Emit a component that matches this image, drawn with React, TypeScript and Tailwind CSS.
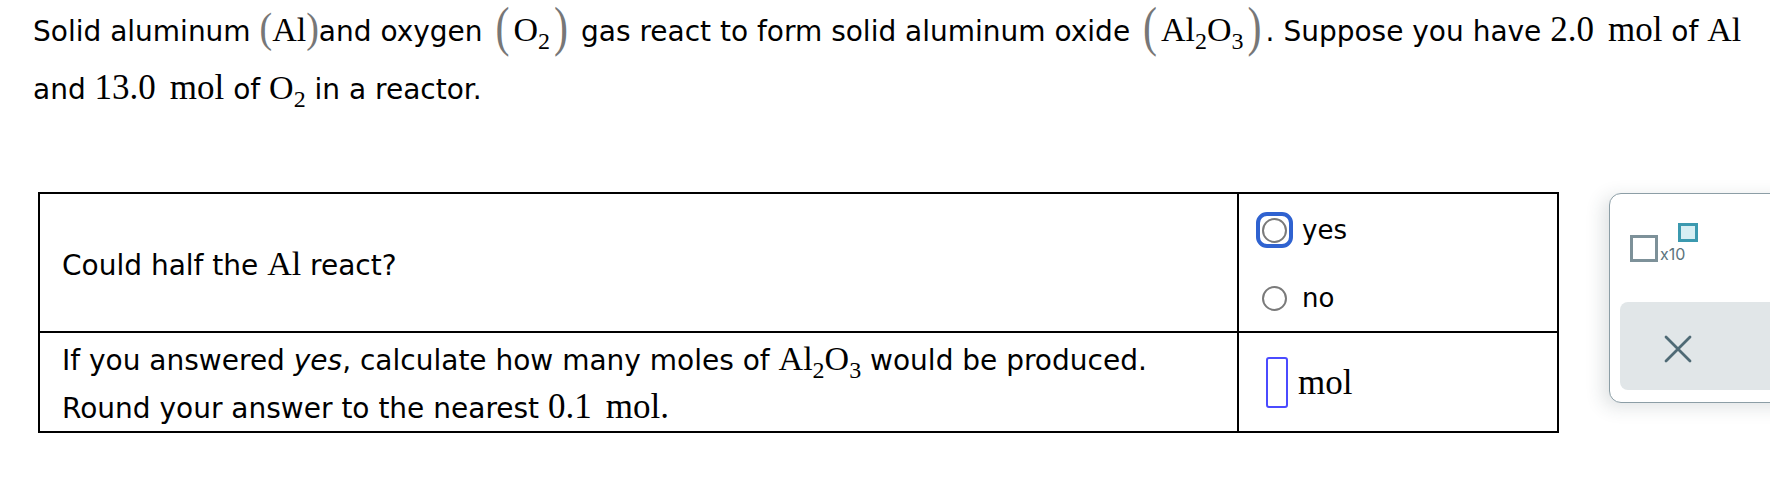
import React from "react";

const M = ({ children }: { children: React.ReactNode }) => (
  <span className="font-['Liberation_Serif',serif] text-[34px] leading-none">{children}</span>
);

// number followed by a unit, with MathJax-like gap
const Q = ({ n, u }: { n: string; u: string }) => (
  <span className="font-['Liberation_Serif',serif] text-[35px] leading-none">
    {n}
    <span className="ml-[14px]">{u}</span>
  </span>
);

const Sub = ({ children }: { children: React.ReactNode }) => (
  <span className="relative top-[8px] font-['Liberation_Serif',serif] text-[24px] leading-none">
    {children}
  </span>
);

const Paren = ({ c, big }: { c: string; big?: boolean }) => (
  <span
    className={
      big
        ? "mx-[4px] inline-block scale-y-[1.3] font-['Liberation_Serif',serif] text-[42px] leading-none text-[#777]"
        : "inline-block scale-y-[1.1] font-['Liberation_Serif',serif] text-[38px] leading-none text-[#777]"
    }
  >
    {c}
  </span>
);

const Radio = ({ label, focused }: { label: string; focused?: boolean }) => (
  <div className="flex h-[36px] items-center">
    <div
      className={
        focused
          ? "flex h-[36px] w-[37px] items-center justify-center rounded-[11px] border-[4px] border-[#2f62d0]"
          : "flex h-[36px] w-[37px] items-center justify-center"
      }
    >
      <div className="h-[25px] w-[25px] rounded-full border-2 border-[#7a7a7a] bg-white" />
    </div>
    <span className="ml-[9px] text-[26px] leading-none">{label}</span>
  </div>
);

export default function App() {
  return (
    <div className="h-[498px] w-[1770px] overflow-hidden bg-white font-['DejaVu_Sans',sans-serif] text-[28px] text-black">
      <div className="pl-[33px] pt-[3px]">
        <div className="whitespace-nowrap leading-[58px]">
          Solid aluminum <Paren c="(" />
          <M>Al</M>
          <Paren c=")" />
          and oxygen <Paren c="(" big />
          <M>O</M>
          <Sub>2</Sub>
          <Paren c=")" big /> gas react to form solid aluminum oxide <Paren c="(" big />
          <M>Al</M>
          <Sub>2</Sub>
          <M>O</M>
          <Sub>3</Sub>
          <Paren c=")" big />. Suppose you have <Q n="2.0" u="mol" /> of <M>Al</M>
        </div>
        <div className="whitespace-nowrap leading-[58px]">
          and <Q n="13.0" u="mol" /> of <M>O</M>
          <Sub>2</Sub> in a reactor.
        </div>
      </div>

      <div className="mt-[73px] flex items-start pl-[38px]">
        <div className="w-[1521px] shrink-0 border-2 border-black">
          <div className="flex h-[139px] border-b-2 border-black">
            <div className="flex w-[1199px] items-center border-r-2 border-black pl-[22px] pt-[6px]">
              <span>
                Could half the <M>Al</M> react?
              </span>
            </div>
            <div className="flex flex-1 flex-col gap-[32px] pl-[17px] pt-[18px]">
              <Radio label="yes" focused />
              <Radio label="no" />
            </div>
          </div>
          <div className="flex h-[98px]">
            <div className="flex w-[1199px] flex-col border-r-2 border-black pl-[22px] pt-[4px] leading-[48px]">
              <div className="whitespace-nowrap">
                If you answered <i>yes</i>, calculate how many moles of <M>Al</M>
                <Sub>2</Sub>
                <M>O</M>
                <Sub>3</Sub> would be produced.
              </div>
              <div className="whitespace-nowrap">
                Round your answer to the nearest <Q n="0.1" u="mol." />
              </div>
            </div>
            <div className="flex flex-1 items-center pl-[27px]">
              <div className="h-[51px] w-[22px] rounded-[3px] border-2 border-[#4b4bff]" />
              <span className="ml-[10px] font-['Liberation_Serif',serif] text-[35px] leading-none">mol</span>
            </div>
          </div>
        </div>

        <div className="ml-[50px] mt-[1px] h-[210px] w-[240px] shrink-0 rounded-[12px] border-[1.5px] border-[#8c9ea6] bg-white pt-[32px] shadow-[-6px_4px_18px_rgba(40,60,70,0.15)]">
          <div className="flex h-[75px] items-end pb-[39px] pl-[20px]">
            <div className="h-[27px] w-[28px] border-[3px] border-[#7d9199]" />
            <div className="ml-[2px] flex flex-col">
              <div className="ml-[18px] h-[19px] w-[20px] border-[3px] border-[#3b99af] bg-[#d6eef3]" />
              <span className="mt-[4px] font-['Inter',sans-serif] text-[16px] leading-4 text-[#5b737c]">x10</span>
            </div>
          </div>
          <div className="mx-[10px] mt-[1px] flex h-[88px] items-center rounded-[8px] bg-[#e1e6e8] pl-[44px] pt-[6px]">
            <svg width="28" height="28" viewBox="0 0 28 28" fill="none">
              <path d="M2 2 L26 26 M26 2 L2 26" stroke="#4f6a75" strokeWidth="2.8" strokeLinecap="round" />
            </svg>
          </div>
        </div>
      </div>
    </div>
  );
}
